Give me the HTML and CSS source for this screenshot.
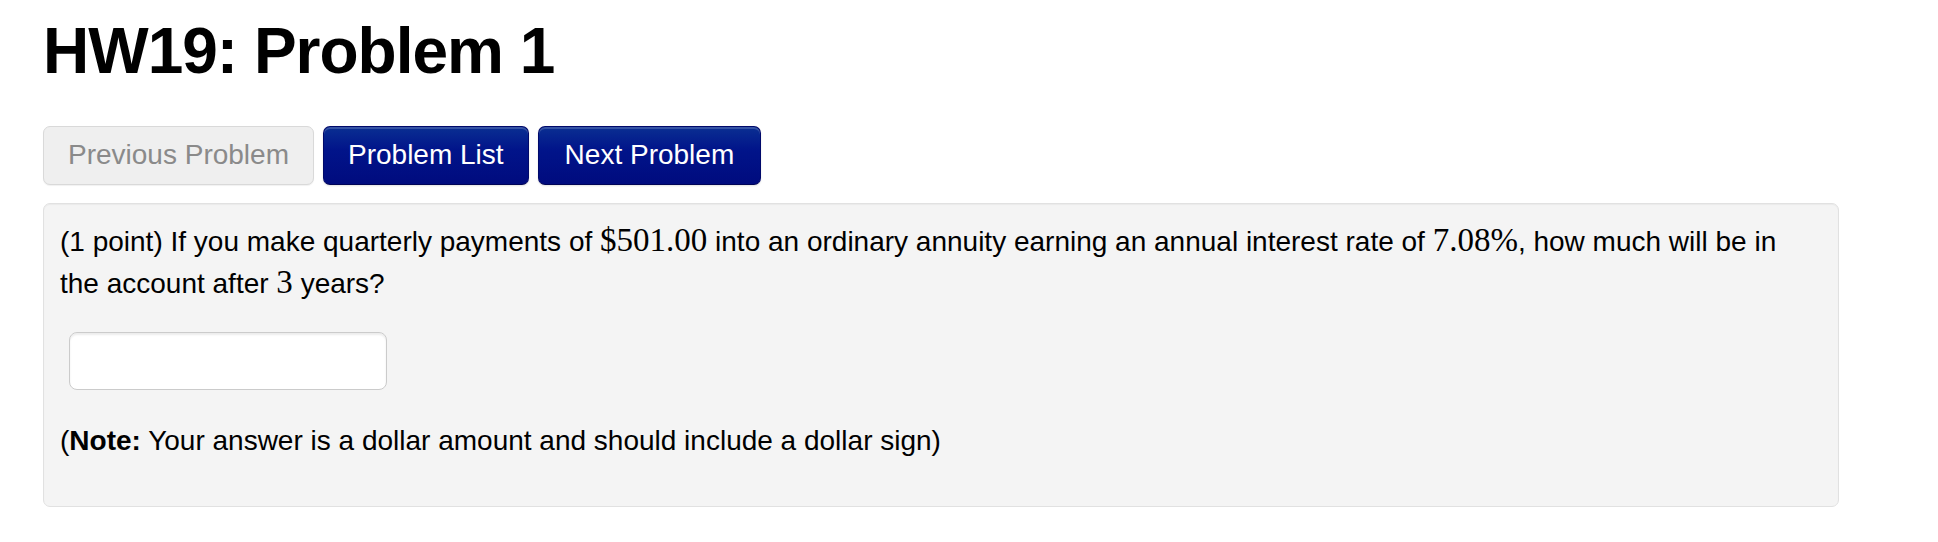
FILE: index.html
```html
<!DOCTYPE html>
<html>
<head>
<meta charset="utf-8">
<title>HW19: Problem 1</title>
<link rel="stylesheet" href="styles.css">
</head>
<body>
<div class="page">
  <h1 class="title">HW19: Problem 1</h1>
  <div class="nav">
    <span class="btn btn-disabled">Previous Problem</span>
    <span class="btn btn-primary">Problem List</span>
    <span class="btn btn-primary btn-wide">Next Problem</span>
  </div>
  <div class="problem">
    <p class="question">(1 point) If you make quarterly payments of <span class="math">$501.00</span> into an ordinary annuity earning an annual interest rate of <span class="math">7.08%</span>, how much will be in the account after <span class="math">3</span> years?</p>
    <div class="answer"><input class="answer-input" type="text"></div>
    <p class="note">(<b>Note:</b> Your answer is a dollar amount and should include a dollar sign)</p>
  </div>
</div>
</body>
</html>
```
FILE: styles.css
```css
html, body {
  margin: 0;
  padding: 0;
  background: #ffffff;
}

body {
  font-family: "Liberation Sans", Arial, Helvetica, sans-serif;
  font-size: 28px;
  line-height: 40px;
  color: #000000;
}

.page {
  padding: 16px 0 0 43px;
  width: 1796px;
}

.title {
  margin: 0;
  font-size: 64px;
  line-height: 70px;
  font-weight: bold;
  letter-spacing: -1px;
}

.nav {
  display: flex;
  gap: 9px;
  margin-top: 40px;
}

.btn {
  display: inline-block;
  padding: 8px 24px 9px 24px;
  font-size: 28px;
  line-height: 40px;
  border: 1px solid;
  border-radius: 7px;
  white-space: nowrap;
}

.btn-wide {
  padding-left: 26px;
  padding-right: 26px;
}

.btn-disabled {
  background: #efefef;
  border-color: #d9d9d9;
  color: #8a8a8a;
  box-shadow: 0 1px 1px rgba(0, 0, 0, 0.06);
}

.btn-primary {
  background: linear-gradient(to bottom, #0a2f92 0%, #01148a 40%, #000b7e 100%);
  border-color: #00096a #00096a #000456;
  color: #ffffff;
  box-shadow: inset 0 2px 0 rgba(255, 255, 255, 0.18), 0 1px 2px rgba(0, 0, 0, 0.12);
}

.problem {
  margin-top: 18px;
  padding: 16px 16px 45px 16px;
  background: #f4f4f4;
  border: 1px solid #e1e1e1;
  border-radius: 7px;
  box-shadow: inset 0 1px 1px rgba(0, 0, 0, 0.04);
}

.question {
  margin: 0;
}

.math {
  font-family: "Liberation Serif", "Times New Roman", serif;
  font-size: 33px;
}

.answer {
  margin-top: 28px;
  line-height: 0;
}

.answer-input {
  margin: 0 0 0 9px;
  width: 318px;
  height: 58px;
  box-sizing: border-box;
  border: 1px solid #cbcbcb;
  border-radius: 8px;
  background: #ffffff;
  box-shadow: inset 0 2px 2px rgba(0, 0, 0, 0.075);
  font-family: inherit;
  font-size: 28px;
  padding: 8px 12px;
}

.note {
  margin: 31px 0 0 0;
}
```
